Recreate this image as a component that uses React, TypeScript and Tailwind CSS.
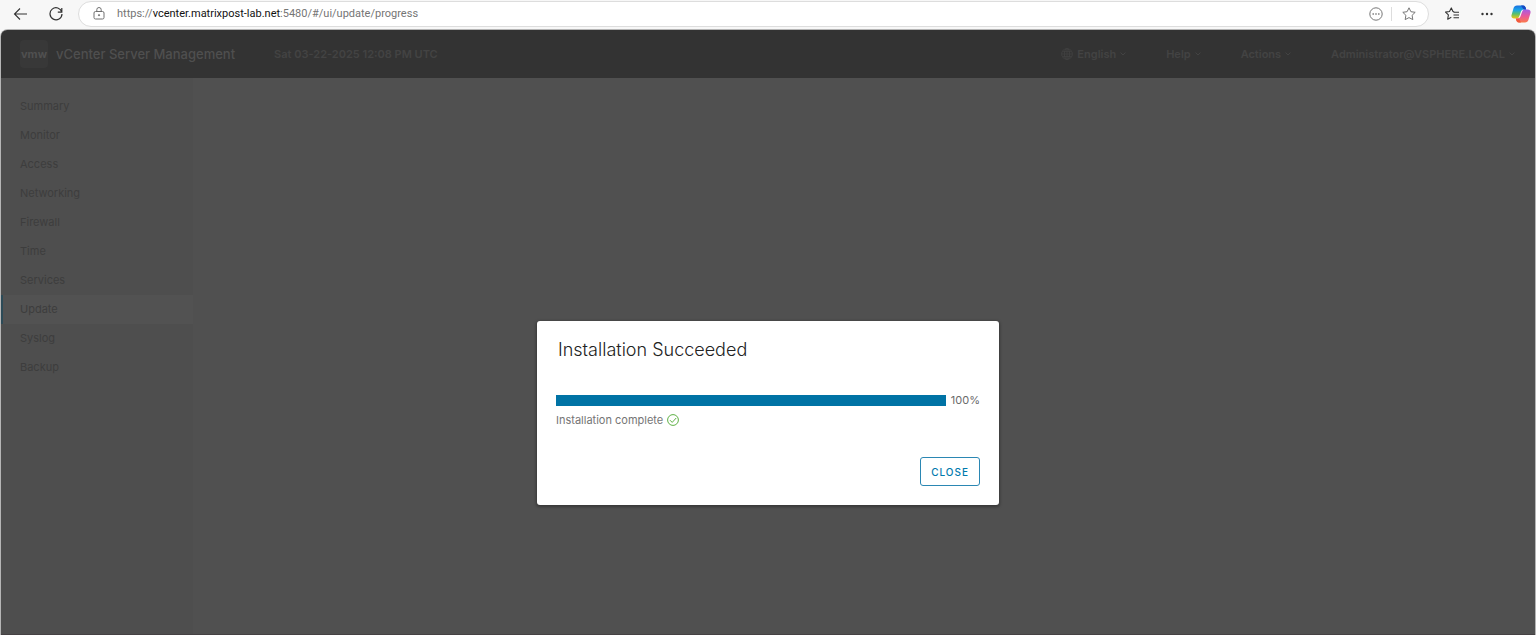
import React from 'react';
import clsx from 'clsx';

const navItems = [
  'Summary',
  'Monitor',
  'Access',
  'Networking',
  'Firewall',
  'Time',
  'Services',
  'Update',
  'Syslog',
  'Backup',
];

function CopilotLogo() {
  return (
    <svg width="20" height="18" viewBox="0 0 20 18" aria-hidden="true">
      <defs>
        <linearGradient id="copilot-left" x1="0" y1="0" x2="0" y2="1">
          <stop offset="0" stopColor="#1b6fe0" />
          <stop offset="0.35" stopColor="#1aa6e8" />
          <stop offset="0.65" stopColor="#5cc06a" />
          <stop offset="1" stopColor="#f2c50f" />
        </linearGradient>
        <linearGradient id="copilot-right" x1="0" y1="0" x2="0" y2="1">
          <stop offset="0" stopColor="#a45be6" />
          <stop offset="0.5" stopColor="#e8589c" />
          <stop offset="1" stopColor="#fb7a4b" />
        </linearGradient>
      </defs>
      <path
        d="M6 0.5h6.2c1.2 0 2 .8 2.400 2l.6 2h-2.400c-1.700 0-2.500 1-3 2.500L8.400 11c-.6 1.700-1.400 2.500-3 2.500H3.200C1 13.500 0 12 .6 9.800L2.600 3C3.100 1.400 4.200.5 6 .5z"
        fill="url(#copilot-left)"
      />
      <path
        d="M14 17.500H7.800c-1.200 0-2-.8-2.400-2l-.6-2h1.800c1.700 0 2.500-1 3-2.500L11 7c.6-1.700 1.400-2.500 3-2.500h2.800c2.200 0 3.200 1.500 2.600 3.700l-2 6.800c-.5 1.600-1.600 2.500-3.400 2.500z"
        fill="url(#copilot-right)"
      />
      <path d="M10 .5h2.200c1.200 0 2 .8 2.400 2l.6 2h-2.600z" fill="#1549c4" />
      <path d="M10 17.500H7.800c-1.200 0-2-.8-2.400-2l-.6-2h3z" fill="#f25a3c" />
    </svg>
  );
}

function BrowserBar() {
  return (
    <div className="flex h-[29px] items-center bg-[#f7f7f7] pb-[2px] pl-3 pr-[5px]">
      <button type="button" aria-label="Back" className="flex w-4 justify-center text-[#333333]">
        <svg width="15" height="14" viewBox="0 0 15 14" fill="none" stroke="currentColor" strokeWidth="1.100">
          <path d="M14 7H1.500M7 1.500L1.500 7L7 12.500" />
        </svg>
      </button>
      <button type="button" aria-label="Refresh" className="ml-5 flex w-4 justify-center text-[#333333]">
        <svg width="14" height="14" viewBox="0 0 14 14" fill="none" stroke="currentColor" strokeWidth="1.200">
          <path d="M12.800 5.200A6 6 0 1 0 13 7M12.800 1v4.200H8.800" />
        </svg>
      </button>
      <div className="ml-[14px] flex h-[26px] flex-1 items-center rounded-full border border-[#dddddd] bg-white pl-[14px] pr-3">
        <svg width="12" height="13" viewBox="0 0 12 13" fill="none" stroke="#707070" strokeWidth="1" className="shrink-0">
          <rect x="1" y="4.500" width="10" height="7.500" rx="1.500" />
          <path d="M3.800 4.500V2.700a2.200 2.200 0 0 1 4.400 0v1.800" />
          <circle cx="6" cy="8.200" r="0.600" fill="#707070" />
        </svg>
        <a
          href="#/ui/update/progress"
          className="ml-3 flex-1 whitespace-nowrap font-['Roboto',sans-serif] text-[11px] leading-4 text-[#757575]"
        >
          https://<span className="text-[#111111]">vcenter.matrixpost-lab.net</span>:5480/#/ui/update/progress
        </a>
        <button type="button" aria-label="Site options" className="text-[#777777]">
          <svg width="14" height="14" viewBox="0 0 14 14" fill="none" stroke="currentColor">
            <circle cx="7" cy="7" r="6.200" />
            <path d="M3.500 7h1.400M6.300 7h1.400M9.100 7h1.400" strokeWidth="1.400" />
          </svg>
        </button>
        <span className="ml-2 h-[14px] w-px bg-[#dddddd]" />
        <button type="button" aria-label="Add to favorites" className="ml-[10px] text-[#777777]">
          <svg width="14" height="14" viewBox="0 0 14 14" fill="none" stroke="currentColor" strokeLinejoin="round">
            <path d="M7 .8l1.900 3.900 4.300.6-3.100 3 .7 4.300L7 10.600l-3.800 2 .7-4.300-3.100-3 4.300-.6z" />
          </svg>
        </button>
      </div>
      <button type="button" aria-label="Favorites" className="ml-4 text-[#333333]">
        <svg width="14" height="14" viewBox="0 0 14 14" fill="none" stroke="currentColor" strokeWidth="1.100" strokeLinejoin="round">
          <path d="M9.200 4.700L8 4.500 6.300.9 4.500 4.500l-4 .6 2.900 2.800-.7 4.300 3.600-1.900" />
          <path d="M8.500 5.200H14M8.500 8H14M8.500 10.800H14" />
        </svg>
      </button>
      <button type="button" aria-label="Settings and more" className="ml-[22px] text-[#333333]">
        <svg width="12" height="14" viewBox="0 0 12 14" fill="currentColor">
          <circle cx="1.500" cy="7" r="1.200" />
          <circle cx="6" cy="7" r="1.200" />
          <circle cx="10.500" cy="7" r="1.200" />
        </svg>
      </button>
      <button type="button" aria-label="Copilot" className="ml-[18px]">
        <CopilotLogo />
      </button>
    </div>
  );
}

function MenuButton({ label, icon }: { label: string; icon?: React.ReactNode }) {
  return (
    <button type="button" className="flex items-center gap-1 whitespace-nowrap text-[11px] font-semibold leading-4">
      {icon}
      {label}
      <svg width="6" height="4" viewBox="0 0 6 4" fill="none" stroke="currentColor">
        <path d="M.5 .5L3 3L5.500 .5" />
      </svg>
    </button>
  );
}

function AppHeader() {
  return (
    <header className="flex h-12 items-center rounded-t-md bg-[#333333] pb-px pl-[19px] pr-5 text-[#434343]">
      <span className="flex h-7 w-7 items-center justify-center rounded-sm bg-[#383838] text-[11px] font-bold leading-4 text-[#505050]">
        vmw
      </span>
      <h1 className="ml-2 whitespace-nowrap text-[13px] font-medium leading-5 text-[#4f4f4f]">
        vCenter Server Management
      </h1>
      <span className="ml-[39px] whitespace-nowrap text-[11px] font-semibold leading-4">
        Sat 03-22-2025 12:08 PM UTC
      </span>
      <div className="ml-auto flex items-center gap-10">
        <MenuButton
          label="English"
          icon={
            <svg width="12" height="12" viewBox="0 0 12 12" fill="none" stroke="currentColor" strokeWidth="0.800">
              <circle cx="6" cy="6" r="5.400" />
              <ellipse cx="6" cy="6" rx="2.600" ry="5.400" />
              <path d="M.6 6h10.800M6 .6v10.800M1.400 3.300h9.200M1.400 8.700h9.200" />
            </svg>
          }
        />
        <MenuButton label="Help" />
        <MenuButton label="Actions" />
        <MenuButton label="Administrator@VSPHERE.LOCAL" />
      </div>
    </header>
  );
}

function Sidebar() {
  return (
    <nav className="w-48 shrink-0 bg-[#4e4e4e] pt-[14px]">
      {navItems.map((item) => (
        <a
          key={item}
          href={`#/ui/${item.toLowerCase()}`}
          className={clsx(
            'flex h-[29px] items-center border-l-2 pb-px pl-[17px] text-[11px] leading-4 text-[#3d3d3d]',
            item === 'Update' ? 'border-[#2c4a57] bg-[#525252]' : 'border-transparent'
          )}
        >
          {item}
        </a>
      ))}
    </nav>
  );
}

function InstallDialog() {
  return (
    <div
      role="dialog"
      aria-labelledby="dialog-title"
      className="w-[462px] rounded-[3px] bg-white px-[19px] pb-[19px] pt-[17px] shadow-[0_1px_3px_1px_rgba(0,0,0,0.3)]"
    >
      <h2 id="dialog-title" className="pl-[2px] text-[18px] font-light leading-6 text-[#222222]">
        Installation Succeeded
      </h2>
      <div className="mt-[30px] flex items-center">
        <div
          role="progressbar"
          aria-label="Installation progress"
          aria-valuenow={100}
          className="h-[11px] flex-1 bg-[#0073a5]"
        />
        <span className="ml-[5px] text-[11px] leading-4 text-[#6a6a6a]">100%</span>
      </div>
      <p className="mt-1 flex items-center gap-1 text-[11px] leading-4 text-[#757575]">
        Installation complete
        <svg width="12" height="12" viewBox="0 0 12 12" fill="none" stroke="#5eb045">
          <circle cx="6" cy="6" r="5.400" />
          <path d="M3 6.200L5.200 8.400L9.200 4" />
        </svg>
      </p>
      <div className="mt-[29px] flex justify-end">
        <button
          type="button"
          className="h-[29px] rounded-[3px] border border-[#2b87b3] px-[10px] text-[10px] font-medium leading-4 tracking-widest text-[#0079ad]"
        >
          CLOSE
        </button>
      </div>
    </div>
  );
}

export default function App() {
  return (
    <div className="flex min-h-screen flex-col bg-[#f7f7f7] font-['Inter',sans-serif]">
      <BrowserBar />
      <div className="relative flex flex-1 flex-col rounded-t-lg border-x border-t border-[#b5b5b5]">
        <AppHeader />
        <div className="flex flex-1 border-b border-[#454143]">
          <Sidebar />
          <main className="flex-1 bg-[#505050]" />
        </div>
        <div className="absolute inset-0 flex items-start justify-center pt-[291px]">
          <InstallDialog />
        </div>
      </div>
    </div>
  );
}
